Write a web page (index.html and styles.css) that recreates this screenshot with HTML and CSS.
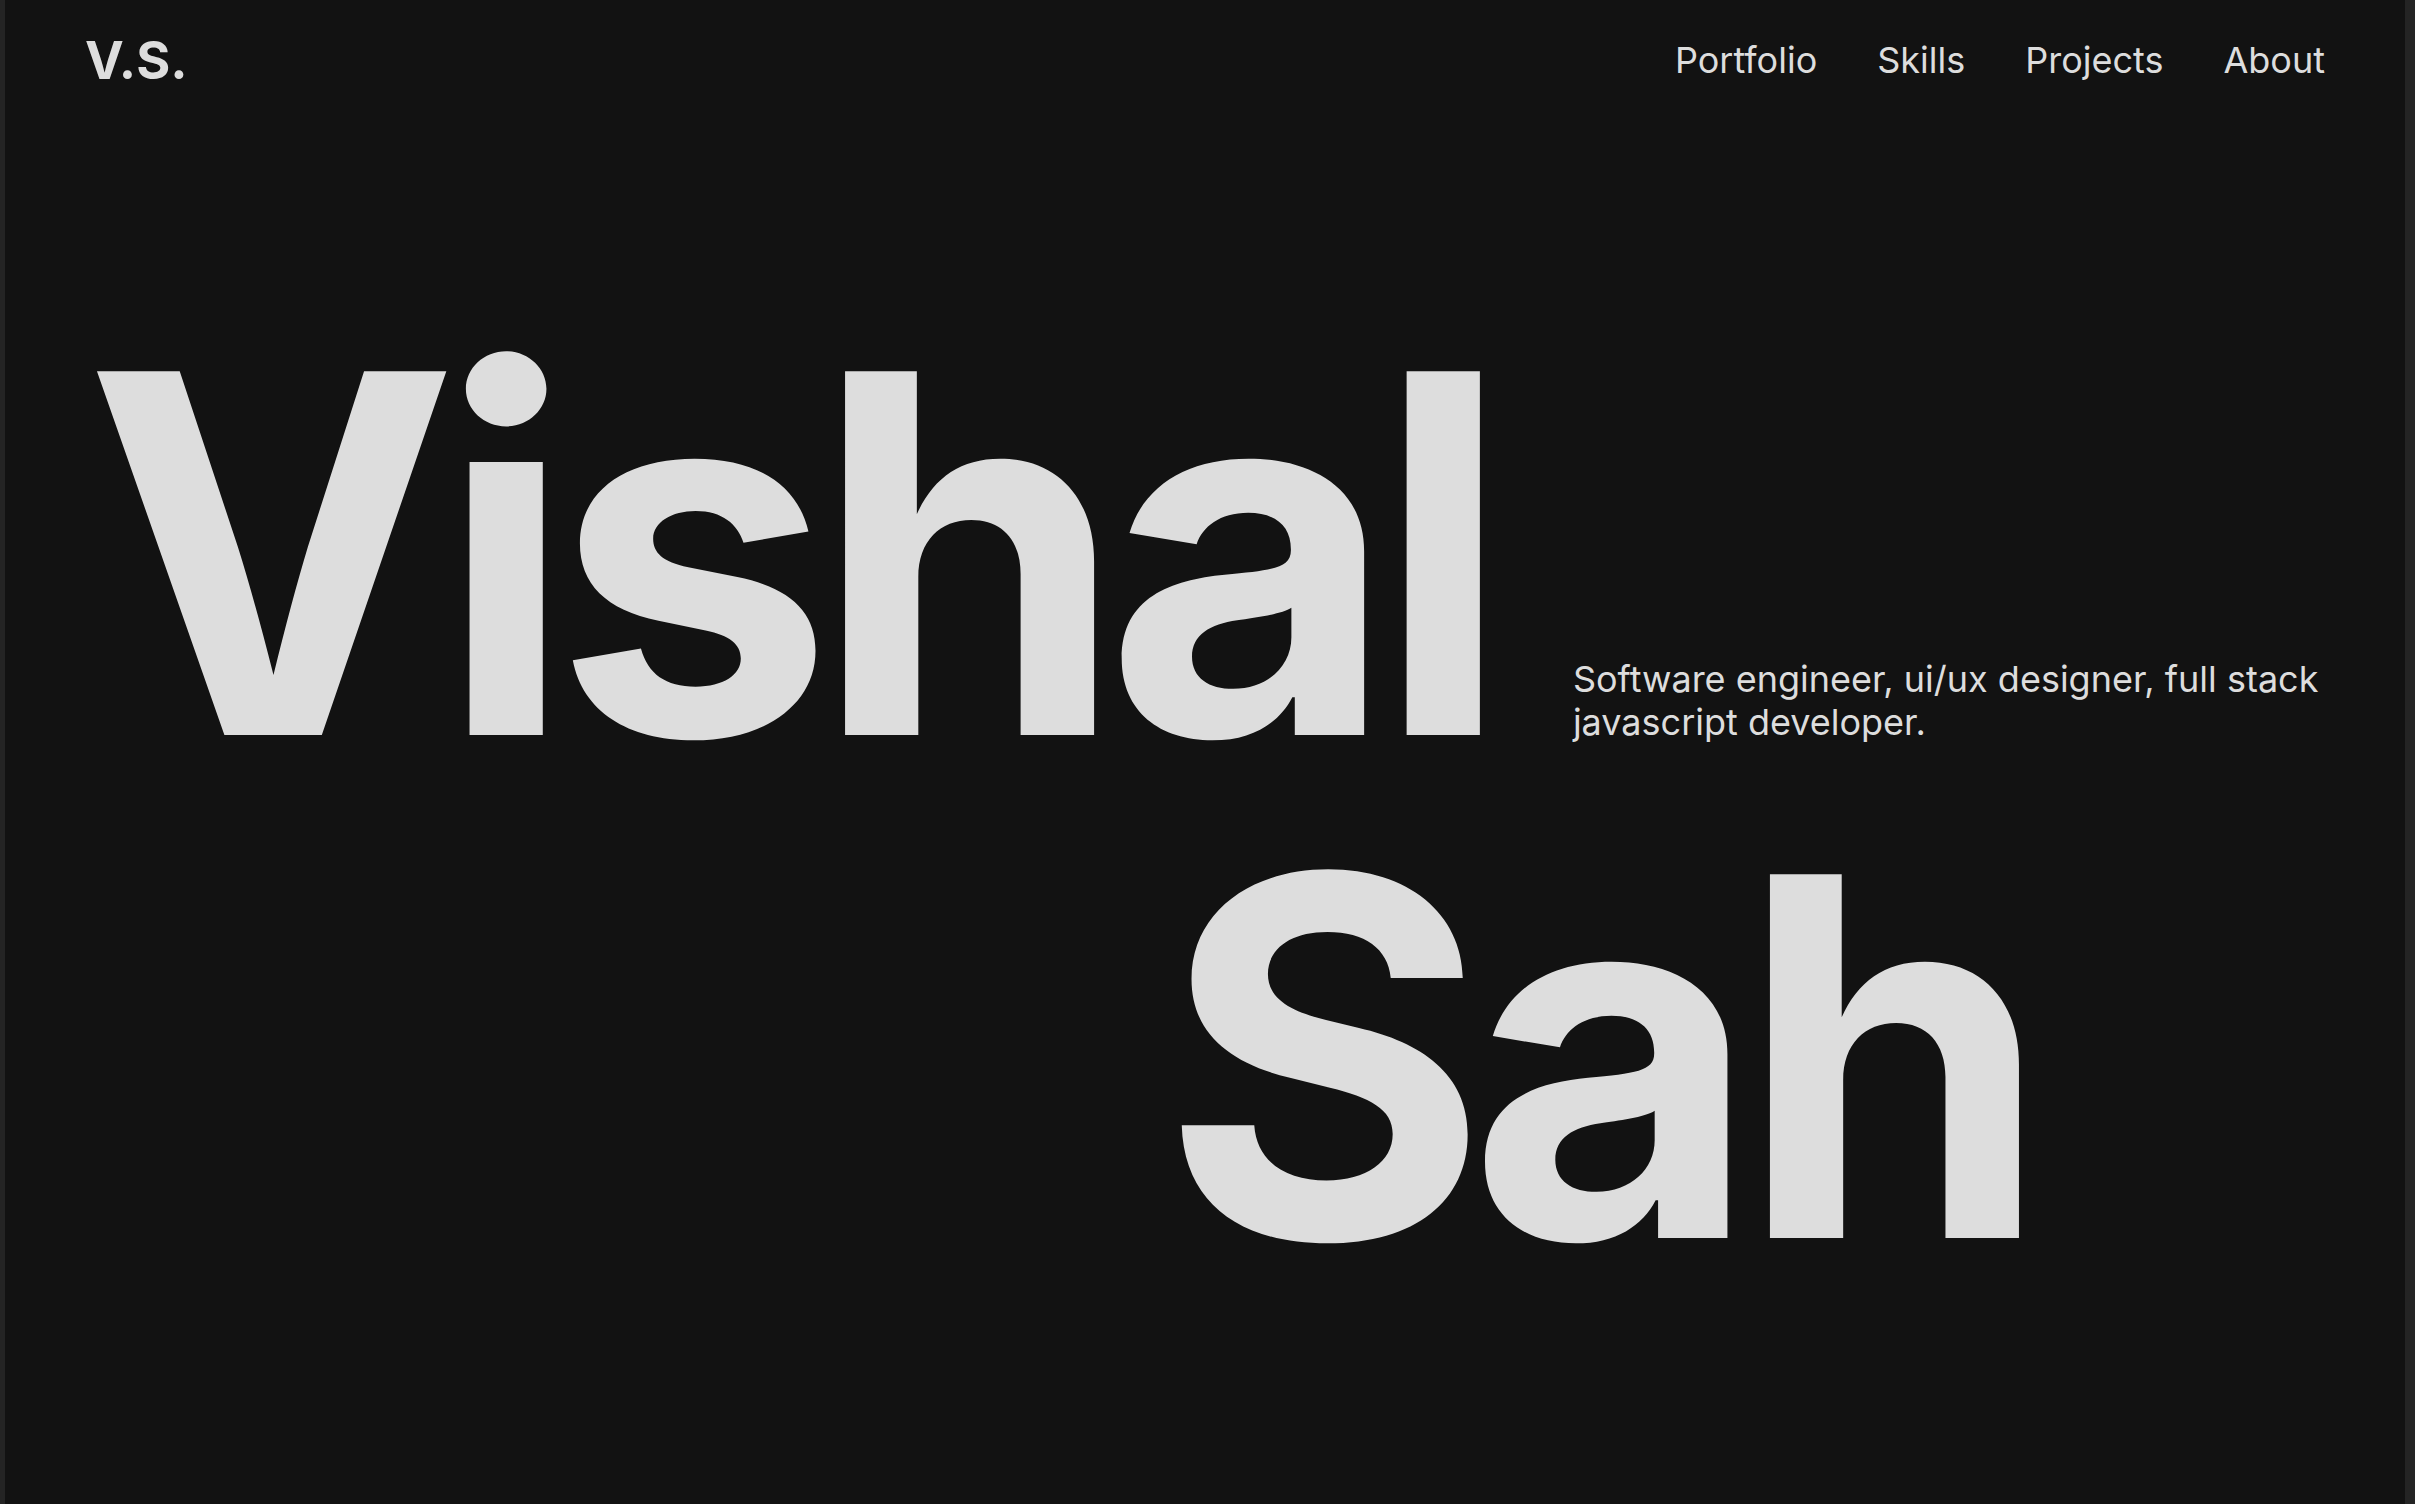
FILE: index.html
```html
<!DOCTYPE html>
<html lang="en">
<head>
<meta charset="utf-8">
<title>Vishal Sah</title>
<link rel="stylesheet" href="styles.css">
</head>
<body>
<div class="page">
  <header class="header">
    <div class="logo">V.S.</div>
    <nav class="nav">
      <a href="#" class="nav-link">Portfolio</a>
      <a href="#" class="nav-link">Skills</a>
      <a href="#" class="nav-link">Projects</a>
      <a href="#" class="nav-link">About</a>
    </nav>
  </header>
  <main class="hero">
    <div class="hero-row">
      <h1 class="name">Vishal</h1>
      <p class="tagline">Software engineer, ui/ux designer, full stack javascript developer.</p>
    </div>
    <div class="hero-row hero-row-2">
      <h1 class="name">Sah</h1>
    </div>
  </main>
</div>
</body>
</html>
```

FILE: styles.css
```css
* { box-sizing: border-box; }
html, body { margin: 0; padding: 0; }
body {
  background: #242424;
  font-family: "Inter", "Liberation Sans", sans-serif;
  color: #dddddd;
  height: 1504px;
  overflow: hidden;
}
.page {
  margin: 0 10px 0 5px;
  background: #121212;
  height: 1504px;
}
.header {
  height: 120px;
  display: flex;
  align-items: center;
  justify-content: space-between;
  padding: 0 80px 0 80px;
}
.logo {
  font-size: 52px;
  font-weight: 700;
}
.nav {
  display: flex;
  gap: 60px;
}
.nav-link {
  color: #dddddd;
  text-decoration: none;
  font-size: 36px;
  font-weight: 400;
}
.hero {
  padding: 184px 82px 0 80px;
}
.hero-row {
  display: flex;
  align-items: flex-end;
}
.name {
  margin: 0;
  font-size: 500px;
  font-weight: 700;
  line-height: 1;
  letter-spacing: -0.04em;
}
.tagline {
  flex: 1;
  margin: 0 0 60px 82px;
  font-size: 36px;
  line-height: 43px;
}
.hero-row-2 {
  padding-left: 1076px;
  margin-top: 3px;
}
```
